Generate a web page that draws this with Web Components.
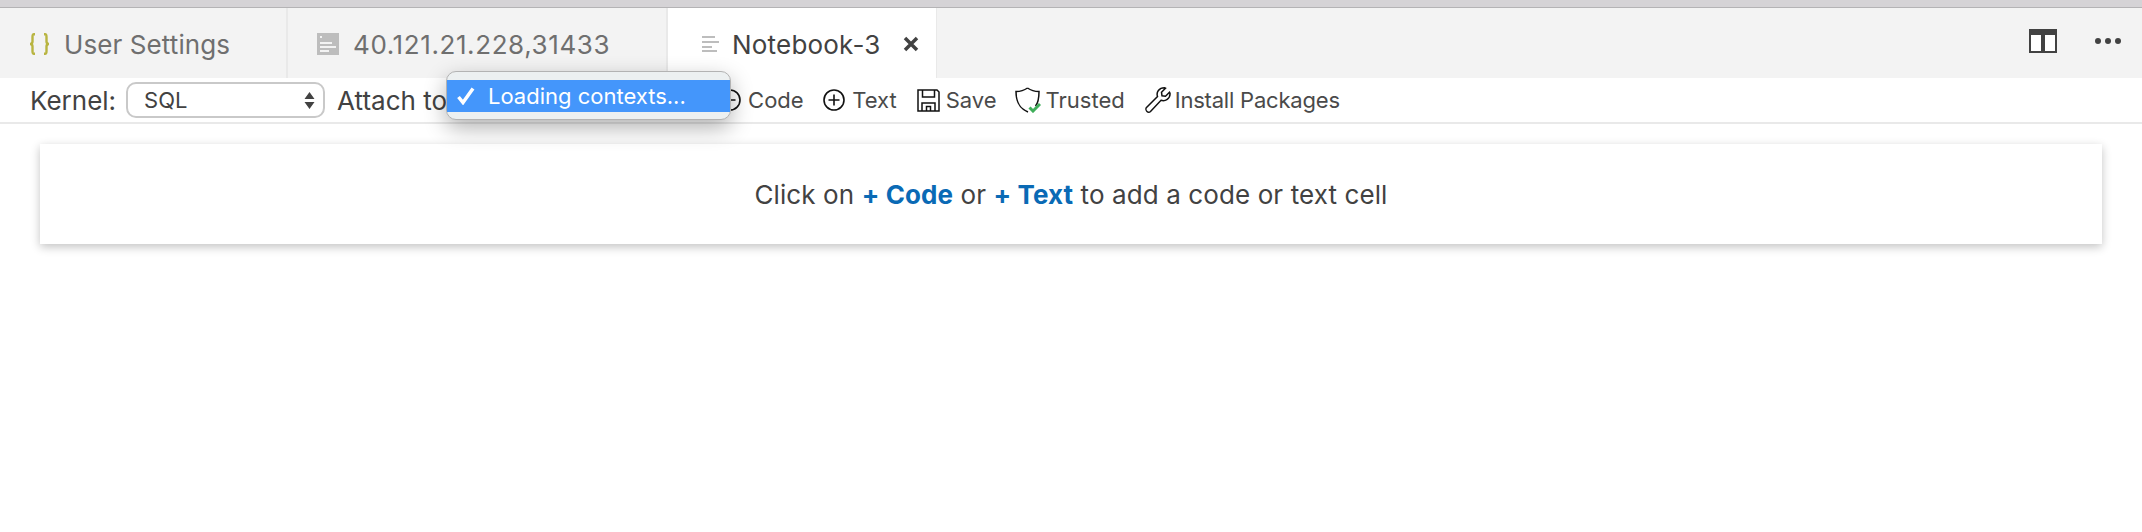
<!DOCTYPE html>
<html>
<head>
<meta charset="utf-8">
<style>
    html, body { margin: 0; padding: 0; background: #fff; }
    body { width: 2142px; height: 532px; overflow: hidden; font-family: Inter, "Liberation Sans", sans-serif; }
</style>
</head>
<body>
<notebook-editor>
    <editor-tab slot="tabs" label="User Settings" style="--tab-width: 288px; --icon-gap: 14px; --pad: 29px; --ls: 0.1px">
        <svg slot="icon" width="21" height="22" viewBox="0 0 21 22" fill="none" stroke="#b8b440" stroke-width="2.4"><path d="M6 1.200H5C3.500 1.200 3.500 2.200 3.500 4v4.500C3.500 10 2.500 11 1 11c1.500 0 2.500 1 2.500 2.500V18c0 1.800 0 2.800 1.500 2.800h1M15 1.200h1c1.500 0 1.500 1 1.500 2.800v4.500c0 1.500 1 2.500 2.500 2.500-1.500 0-2.500 1-2.500 2.500V18c0 1.800 0 2.800-1.500 2.800h-1"/></svg>
    </editor-tab>
    <editor-tab slot="tabs" label="40.121.21.228,31433" style="--tab-width: 380px; --icon-gap: 14px; --pad: 29px; --ls: 0.6px">
        <svg slot="icon" width="22" height="22" viewBox="0 0 22 22"><path fill="#bdbdbd" d="M0 0h22v22H0z"/><path fill="#f3f3f3" d="M3 3h2v2H3zM3 9h12v2H3zM3 13h16v2H3zM3 17h9v2H3z"/></svg>
    </editor-tab>
    <editor-tab slot="tabs" active closable label="Notebook-3" style="--tab-width: 269px; --icon-gap: 13px; --pad: 34px; --ls: 0.2px">
        <svg slot="icon" width="17" height="18" viewBox="0 0 17 18"><path fill="#bdbdbd" d="M0 1h13v2H0zM0 6h17v2H0zM0 11h10v2H0zM0 15h15v2H0z"/></svg>
    </editor-tab>
    <svg slot="actions" width="28" height="24" viewBox="0 0 28 24"><path fill="#424242" d="M0 0h28v24H0z"/><path fill="#fff" d="M2 6h10v16H2zM16 6h10v16H16z"/></svg>
    <svg slot="actions" width="28" height="8" viewBox="0 0 28 8" fill="#424242"><circle cx="4" cy="4" r="3"/><circle cx="14" cy="4" r="3"/><circle cx="24" cy="4" r="3"/></svg>

    <notebook-toolbar slot="toolbar">
        <tool-label>Kernel:</tool-label>
        <kernel-select>SQL</kernel-select>
        <tool-label style="margin-left: 12px; width: 382px">Attach to</tool-label>
        <tool-button style="--gap: 7px">
            <svg slot="icon" width="22" height="22" viewBox="0 0 22 22" fill="none" stroke="#111" stroke-width="1.600"><circle cx="11" cy="11" r="10"/><path d="M11 5.500v11M5.500 11h11"/></svg>
            Code
        </tool-button>
        <tool-button style="margin-left: 19.5px; --gap: 7px">
            <svg slot="icon" width="22" height="22" viewBox="0 0 22 22" fill="none" stroke="#111" stroke-width="1.600"><circle cx="11" cy="11" r="10"/><path d="M11 5.500v11M5.500 11h11"/></svg>
            Text
        </tool-button>
        <tool-button style="margin-left: 20px; --gap: 6px">
            <svg slot="icon" width="23" height="23" viewBox="0 0 23 23" fill="none" stroke="#111" stroke-width="1.500"><path d="M1 1h19l2 2v19H1zM5.500 1v7h12V1M5 22v-8h13v8M9.500 22v-4.500h4V22"/></svg>
            Save
        </tool-button>
        <tool-button style="margin-left: 18px; --gap: 5px">
            <svg slot="icon" width="26" height="26" viewBox="0 0 26 26" fill="none"><path stroke="#111" stroke-width="1.500" d="M12.500 1C16 3.500 19 4.500 24 4.500c0 7-.5 11-3.500 14.500M13 25C6 22 1 17 1 4.500 6 4.500 9 3.500 12.500 1"/><path stroke="#3fae5a" stroke-width="3" d="M14.500 20.500l3.500 3.500 7-7"/></svg>
            Trusted
        </tool-button>
        <tool-button style="margin-left: 20px; --gap: 4px; letter-spacing: -0.2px">
            <svg slot="icon" width="26" height="26" viewBox="0 0 26 26" fill="none" stroke="#111" stroke-width="1.500"><path d="M1.500 20.500 12.500 9.500C11 5 14 .8 19.500.8l1 .5-4 4 .5 3.500 3.500.5 4-4 .5 1c.5 5.500-5 8.500-9 7L5.500 24.500c-1 1-2.500 1-3.500 0s-1.500-3-.5-4z"/></svg>
            Install Packages
        </tool-button>
    </notebook-toolbar>

    <empty-cell slot="content">Click on <b>+ Code</b> or <b>+ Text</b> to add a code or text cell</empty-cell>

    <context-menu slot="overlay">Loading contexts...</context-menu>
</notebook-editor>

<script>
class NotebookEditor extends HTMLElement {
    connectedCallback() {
        this.attachShadow({ mode: 'open' });
        this.shadowRoot.innerHTML = `
            <style>
                :host { display: block; position: relative; width: 2142px; height: 532px; background: #fff; }
                .titlebar { height: 7px; background: #d5d3d6; border-bottom: 1px solid #b4b3b5; }
                .tabbar { display: flex; height: 70px; background: #f3f3f3; }
                .tabs { display: flex; flex: 1; }
                .actions { display: flex; align-items: center; gap: 37px; padding: 0 20px 5px 0; height: 70px; box-sizing: border-box; }
                .toolbar { height: 44px; border-bottom: 2px solid #e9e9e9; }
                .content { padding: 20px 40px 0; }
            </style>
            <div class="titlebar"></div>
            <div class="tabbar">
                <div class="tabs"><slot name="tabs"></slot></div>
                <div class="actions"><slot name="actions"></slot></div>
            </div>
            <div class="toolbar"><slot name="toolbar"></slot></div>
            <div class="content"><slot name="content"></slot></div>
            <slot name="overlay"></slot>
        `;
    }
}

class EditorTab extends HTMLElement {
    connectedCallback() {
        this.attachShadow({ mode: 'open' });
        const closable = this.hasAttribute('closable');
        this.shadowRoot.innerHTML = `
            <style>
                :host {
                    display: flex;
                    align-items: center;
                    box-sizing: border-box;
                    width: var(--tab-width);
                    height: 70px;
                    padding: 2px 0 0 var(--pad);
                    gap: var(--icon-gap);
                    border-right: 2px solid #e9e9e9;
                    color: #6f6f6f;
                    font-size: 26px;
                    letter-spacing: var(--ls);
                }
                :host([active]) { background: #fff; color: #424242; border-right-width: 1px; }
                ::slotted(svg) { flex: none; }
                .close { margin-left: 9px; }
            </style>
            <slot name="icon"></slot>
            <span>${this.getAttribute('label')}</span>
            ${closable ? '<svg class="close" width="16" height="16" viewBox="0 0 16 16" stroke="#424242" stroke-width="3.5"><path d="M2 2l12 12M14 2L2 14"/></svg>' : ''}
        `;
    }
}

class NotebookToolbar extends HTMLElement {
    connectedCallback() {
        this.attachShadow({ mode: 'open' });
        this.shadowRoot.innerHTML = `
            <style>
                :host { display: flex; align-items: center; height: 44px; padding-left: 30px; color: #424242; }
            </style>
            <slot></slot>
        `;
    }
}

class ToolLabel extends HTMLElement {
    connectedCallback() {
        this.attachShadow({ mode: 'open' });
        this.shadowRoot.innerHTML = `
            <style>
                :host { display: block; flex: none; font-size: 26px; color: #424242; }
            </style>
            <slot></slot>
        `;
    }
}

class KernelSelect extends HTMLElement {
    connectedCallback() {
        this.attachShadow({ mode: 'open' });
        this.shadowRoot.innerHTML = `
            <style>
                :host {
                    display: flex;
                    flex: none;
                    align-items: center;
                    justify-content: space-between;
                    box-sizing: border-box;
                    width: 199px;
                    height: 36px;
                    margin-left: 10px;
                    padding: 0 8px 0 16px;
                    border: 2px solid #c9c9c9;
                    border-radius: 10px;
                    background: #fff;
                    font-size: 22px;
                    color: #424242;
                }
            </style>
            <slot></slot>
            <svg width="11" height="19" viewBox="0 0 11 19" fill="#424242"><path d="M5.500 1l5 7H.5zM5.500 18l-5-7h10z"/></svg>
        `;
    }
}

class ToolButton extends HTMLElement {
    connectedCallback() {
        this.attachShadow({ mode: 'open' });
        this.shadowRoot.innerHTML = `
            <style>
                :host { display: flex; flex: none; align-items: center; gap: var(--gap); font-size: 22px; color: #4a4a4a; white-space: nowrap; }
                ::slotted(svg) { flex: none; }
            </style>
            <slot name="icon"></slot>
            <span><slot></slot></span>
        `;
    }
}

class EmptyCell extends HTMLElement {
    connectedCallback() {
        this.attachShadow({ mode: 'open' });
        this.shadowRoot.innerHTML = `
            <style>
                :host {
                    display: flex;
                    align-items: center;
                    justify-content: center;
                    height: 100px;
                    background: #fff;
                    box-shadow: 0 3px 9px rgba(0, 0, 0, 0.24);
                    font-size: 26px;
                    letter-spacing: 0.1px;
                    color: #424242;
                }
                ::slotted(b) { color: #0a6ab5; font-weight: 700; }
                span { white-space: pre; }
            </style>
            <span><slot></slot></span>
        `;
    }
}

class ContextMenu extends HTMLElement {
    connectedCallback() {
        this.attachShadow({ mode: 'open' });
        this.shadowRoot.innerHTML = `
            <style>
                :host {
                    display: block;
                    position: absolute;
                    left: 446px;
                    top: 71px;
                    width: 285px;
                    height: 49px;
                    box-sizing: border-box;
                    padding-top: 8px;
                    background: #ecf0f1;
                    border: 1px solid #b3b3b3;
                    border-radius: 10px;
                    box-shadow: 0 8px 22px rgba(0, 0, 0, 0.3);
                }
                .item {
                    display: flex;
                    align-items: center;
                    gap: 13px;
                    height: 32px;
                    padding-left: 10px;
                    padding-bottom: 1px;
                    box-sizing: border-box;
                    background: #4496fb;
                    color: #fff;
                    font-size: 22px;
                }
                svg { flex: none; }
            </style>
            <div class="item">
                <svg width="18" height="18" viewBox="0 0 18 18" fill="none" stroke="#fff" stroke-width="3.5"><path d="M1.500 10l4.500 5.500L16 1.500"/></svg>
                <span><slot></slot></span>
            </div>
        `;
    }
}

customElements.define('notebook-editor', NotebookEditor);
customElements.define('editor-tab', EditorTab);
customElements.define('notebook-toolbar', NotebookToolbar);
customElements.define('tool-label', ToolLabel);
customElements.define('kernel-select', KernelSelect);
customElements.define('tool-button', ToolButton);
customElements.define('empty-cell', EmptyCell);
customElements.define('context-menu', ContextMenu);
</script>
</body>
</html>
